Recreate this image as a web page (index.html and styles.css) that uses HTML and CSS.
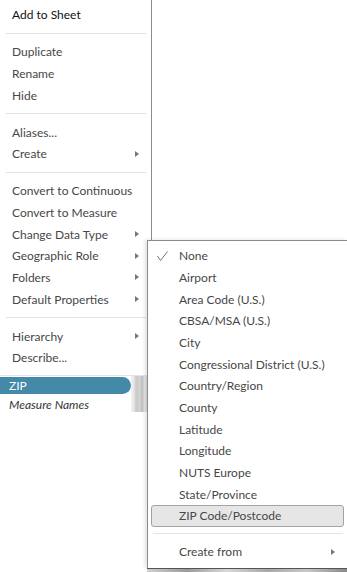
FILE: index.html
```html
<!DOCTYPE html>
<html lang="en">
  <head>
    <meta charset="UTF-8" />
    <meta name="viewport" content="width=device-width, initial-scale=1.0" />
    <title>Field menu</title>
    <link rel="stylesheet" href="styles.css">
  </head>
  <body>
    <div class="workspace">
      <div class="data-pane">
        <ul class="menu main-menu">
          <li class="item strong">Add to Sheet</li>
          <li class="sep"></li>
          <li class="item">Duplicate</li>
          <li class="item">Rename</li>
          <li class="item">Hide</li>
          <li class="sep"></li>
          <li class="item">Aliases...</li>
          <li class="item">Create<span class="arrow"></span></li>
          <li class="sep"></li>
          <li class="item">Convert to Continuous</li>
          <li class="item">Convert to Measure</li>
          <li class="item">Change Data Type<span class="arrow"></span></li>
          <li class="item">Geographic Role<span class="arrow"></span></li>
          <li class="item">Folders<span class="arrow"></span></li>
          <li class="item">Default Properties<span class="arrow"></span></li>
          <li class="sep"></li>
          <li class="item">Hierarchy<span class="arrow"></span></li>
          <li class="item">Describe...</li>
        </ul>
        <div class="fields">
          <div class="field-list">
            <div class="pill">ZIP</div>
            <div class="field">Measure Names</div>
          </div>
          <div class="scroll-strip"></div>
        </div>
      </div>

      <ul class="menu sub-menu">
        <li class="item">
          <span class="check">
            <svg width="11" height="10" viewBox="0 0 11 10"><polyline points="0.5,5 3.5,9.5 10.5,0.5" fill="none" stroke="#777" stroke-width="1"/></svg>
          </span>None
        </li>
        <li class="item"><span class="check"></span>Airport</li>
        <li class="item"><span class="check"></span>Area Code (U.S.)</li>
        <li class="item"><span class="check"></span>CBSA/MSA (U.S.)</li>
        <li class="item"><span class="check"></span>City</li>
        <li class="item"><span class="check"></span>Congressional District (U.S.)</li>
        <li class="item"><span class="check"></span>Country/Region</li>
        <li class="item"><span class="check"></span>County</li>
        <li class="item"><span class="check"></span>Latitude</li>
        <li class="item"><span class="check"></span>Longitude</li>
        <li class="item"><span class="check"></span>NUTS Europe</li>
        <li class="item"><span class="check"></span>State/Province</li>
        <li class="item active"><span class="check"></span>ZIP Code/Postcode</li>
        <li class="sep"></li>
        <li class="item"><span class="check"></span>Create from<span class="arrow"></span></li>
      </ul>

      <div class="canvas-edge"></div>
    </div>
  </body>
</html>
```

FILE: styles.css
```css
body {
  margin: 0;
  background-color: #fff;
  font-family: Lato, "Liberation Sans", Arial, sans-serif;
  font-size: 12px;
  color: #474747;
  overflow: hidden;
}

.workspace {
  position: relative;
  width: 347px;
  height: 572px;
  overflow: hidden;
}

.data-pane {
  width: 152px;
}

.menu {
  list-style: none;
  margin: 0;
  background: #fff;
}

.main-menu {
  width: 151px;
  padding: 4px 0 6px;
  border-right: 1px solid #8c8c8c;
  border-bottom: 1px solid #e4e4e4;
}

.item {
  height: 21.67px;
  display: flex;
  align-items: center;
  box-sizing: border-box;
  white-space: nowrap;
}

.main-menu .item {
  padding: 0 12px;
}

.item.strong {
  color: #111;
}

.arrow {
  margin-left: auto;
  width: 0;
  height: 0;
  border-left: 4px solid #777;
  border-top: 3px solid transparent;
  border-bottom: 3px solid transparent;
}

.sep {
  height: 1px;
  background: #e3e3e3;
  margin: 7px 5px 7.33px 6px;
}

.fields {
  display: flex;
  height: 36px;
}

.field-list {
  width: 131px;
}

.pill {
  height: 17px;
  margin: 1px 0 0 -10px;
  padding-left: 19px;
  border-radius: 9px;
  background: #4489a8;
  color: #fff;
  line-height: 17px;
}

.field {
  height: 21px;
  line-height: 21px;
  padding-left: 9px;
  font-style: italic;
  color: #333;
}

.scroll-strip {
  width: 16px;
  background: linear-gradient(90deg, #f2f2f2 0, #e6e6e6 3px, #c9c9c9 5px, #d4d4d4 9px, #bdbdbd 11px, #ececec 14px, #d8d8d8 16px);
}

/* flyout for Geographic Role */
.sub-menu {
  position: absolute;
  top: 240px;
  left: 147px;
  width: 200px;
  height: 328px;
  box-sizing: border-box;
  padding: 4px 0;
  border-left: 1px solid #8c8c8c;
  border-top: 1px solid #8c8c8c;
  box-shadow: -2px 0 4px rgba(0, 0, 0, 0.12);
}

.sub-menu .item {
  margin: 0 3px;
  padding-right: 8px;
  border: 1px solid transparent;
  border-radius: 3px;
}

.sub-menu .item.active {
  background: #e6e6e6;
  border-color: #a3a3a3;
}

.check {
  width: 27px;
  flex: none;
  display: flex;
  padding-left: 5px;
  box-sizing: border-box;
}

.sub-menu .sep {
  margin: 6px 4px 7.33px 5px;
}

.canvas-edge {
  position: absolute;
  top: 568px;
  left: 147px;
  width: 200px;
  height: 4px;
  border-top: 1px solid #555;
  background: linear-gradient(90deg, #d0d0d0, #9a9a9a 20%, #d8d8d8 40%, #a8a8a8 60%, #c8c8c8 80%, #888);
}
```
